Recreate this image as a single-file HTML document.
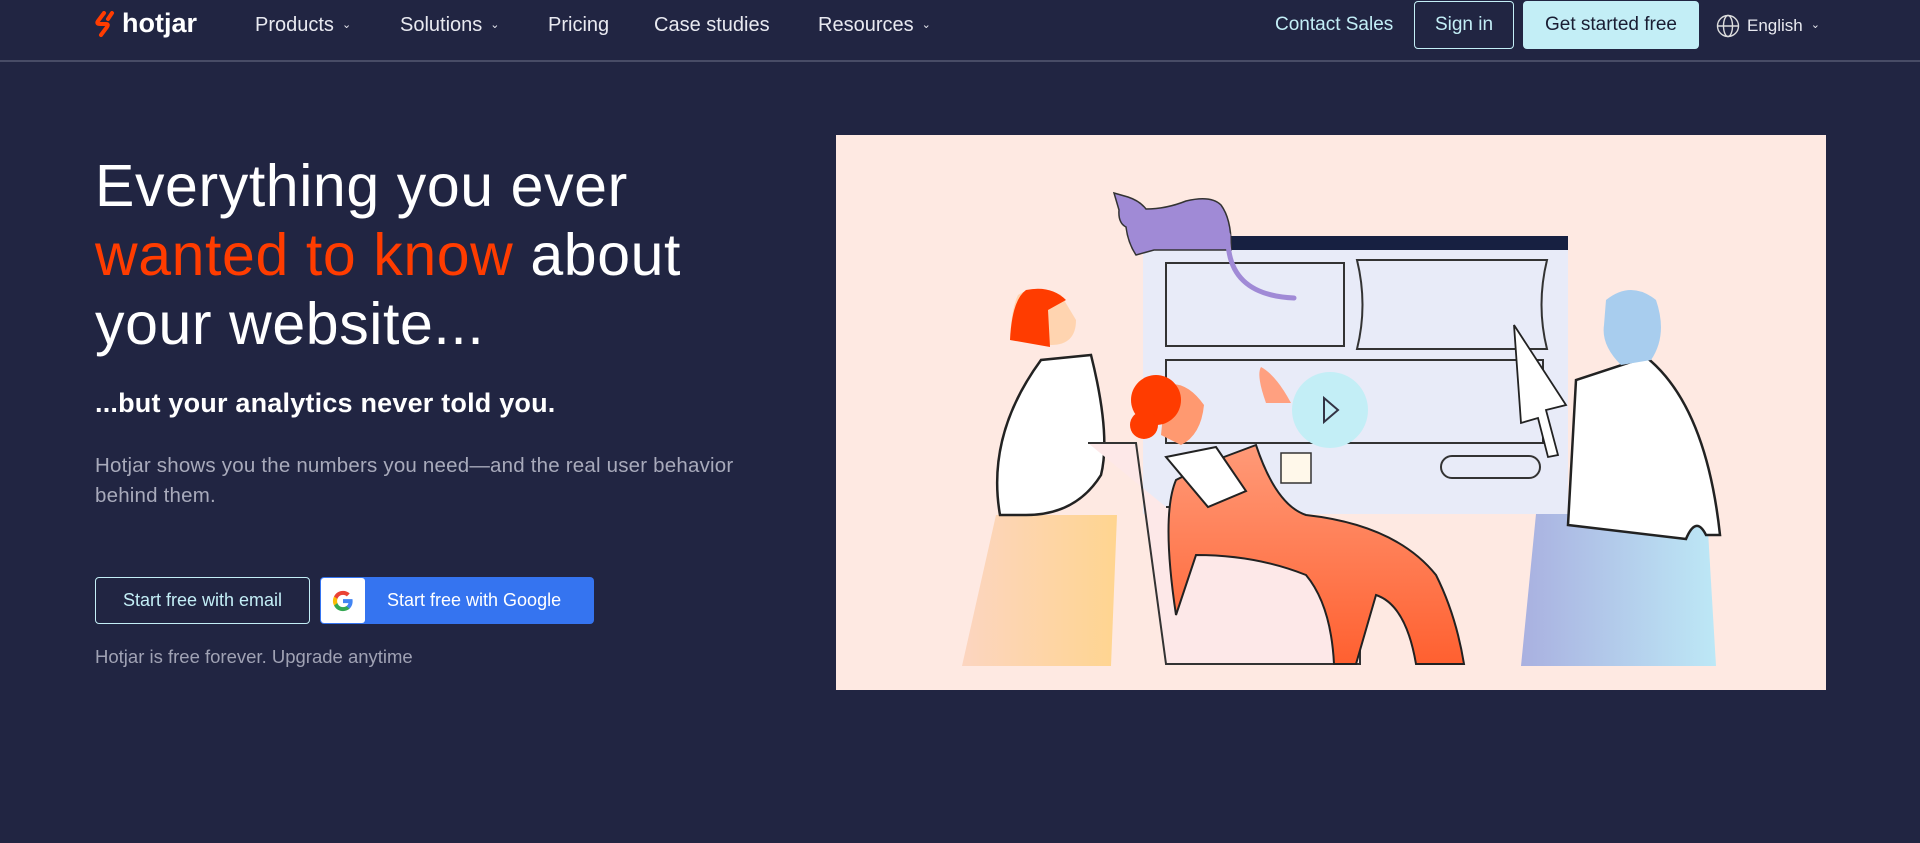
<!DOCTYPE html>
<html><head><meta charset="utf-8"><style>
*{margin:0;padding:0;box-sizing:border-box}
body{width:1920px;height:843px;background:#212542;font-family:"Liberation Sans",sans-serif;overflow:hidden;position:relative;color:#fff}
.nav{position:absolute;left:0;top:0;width:1920px;height:62px;border-bottom:2px solid #484c66}
.a{position:absolute;top:14px;font-size:20px;color:#e8e9f0}
.car{font-size:11px;margin-left:8px;vertical-align:3px}
.btn{position:absolute;border-radius:4px;font-size:19px;display:flex;align-items:center;justify-content:center}
h1{position:absolute;left:95px;top:152px;font-size:59px;font-weight:400;line-height:69px;letter-spacing:0.6px}
h1 span{color:#ff3c00}
.sub{position:absolute;left:95px;top:388px;font-size:27px;font-weight:700;letter-spacing:0.2px}
.p{position:absolute;left:95px;top:451px;font-size:20.5px;line-height:30px;color:#a8aabb;width:760px;letter-spacing:0.2px}
.foot{position:absolute;left:95px;top:646px;font-size:18.5px;color:#a0a2b4}
</style></head><body>
<div class="nav">
 <svg style="position:absolute;left:95px;top:11px" width="22" height="26" viewBox="0 0 22 26"><path d="M9 2 L3 10 Q1 13 5 13 L11 13 Q14 13 12 16 L6 24" stroke="#ff3c00" stroke-width="4" fill="none" stroke-linecap="round"/><path d="M17 2 L13 8" stroke="#ff3c00" stroke-width="4" stroke-linecap="round"/></svg>
 <div class="a" style="left:122px;top:8px;font-size:27px;font-weight:700;color:#fff">hotjar</div>
 <div class="a" style="left:255px">Products<span class="car">⌄</span></div>
 <div class="a" style="left:400px">Solutions<span class="car">⌄</span></div>
 <div class="a" style="left:548px">Pricing</div>
 <div class="a" style="left:654px">Case studies</div>
 <div class="a" style="left:818px">Resources<span class="car">⌄</span></div>
 <div class="a" style="left:1275px;color:#c3eef6;font-size:19px">Contact Sales</div>
 <div class="btn" style="left:1414px;top:1px;width:100px;height:48px;border:1.5px solid #c3eef6;color:#c3eef6">Sign in</div>
 <div class="btn" style="left:1523px;top:1px;width:176px;height:48px;background:#c3eef6;color:#1a1d33">Get started free</div>
 <svg style="position:absolute;left:1716px;top:14px" width="24" height="24" viewBox="0 0 24 24" fill="none" stroke="#ddd" stroke-width="1.4"><circle cx="12" cy="12" r="10.5"/><ellipse cx="12" cy="12" rx="4.5" ry="10.5"/><path d="M1.5 12h21"/></svg>
 <div class="a" style="left:1747px;top:16px;font-size:17px">English<span class="car">⌄</span></div>
</div>
<h1>Everything you ever<br><span>wanted to know</span> about<br>your website...</h1>
<div class="sub">...but your analytics never told you.</div>
<div class="p">Hotjar shows you the numbers you need—and the real user behavior<br>behind them.</div>
<div class="btn" style="left:95px;top:577px;width:215px;height:47px;border:1.5px solid #c3eef6;color:#c3eef6;font-size:18px">Start free with email</div>
<div class="btn" style="left:320px;top:577px;width:274px;height:47px;background:#3574f0;color:#fff;font-size:18px;justify-content:flex-start">
 <div style="width:44px;height:45px;background:#fff;border-radius:3px;margin-left:1px;display:flex;align-items:center;justify-content:center">
 <svg width="22" height="22" viewBox="0 0 48 48"><path fill="#4285F4" d="M45 24.5c0-1.6-.1-3.1-.4-4.5H24v8.5h11.8c-.5 2.7-2.1 5-4.4 6.6v5.5h7.1C42.6 36.7 45 31.1 45 24.5z"/><path fill="#34A853" d="M24 46c5.9 0 10.9-2 14.5-5.3l-7.1-5.5c-2 1.3-4.5 2.1-7.4 2.1-5.7 0-10.5-3.8-12.2-9H4.5v5.7C8.1 41.2 15.5 46 24 46z"/><path fill="#FBBC05" d="M11.8 28.3c-.4-1.3-.7-2.8-.7-4.3s.3-3 .7-4.3V14H4.5C3 17 2 20.4 2 24s1 7 2.5 10z"/><path fill="#EA4335" d="M24 10.7c3.2 0 6.1 1.1 8.4 3.3l6.3-6.3C34.9 4.1 29.9 2 24 2 15.5 2 8.1 6.8 4.5 14l7.3 5.7c1.7-5.2 6.5-9 12.2-9z"/></svg></div>
 <span style="margin-left:22px">Start free with Google</span></div>
<div class="foot">Hotjar is free forever. Upgrade anytime</div>

<svg style="position:absolute;left:836px;top:135px" width="990" height="555" viewBox="0 0 990 555">
<defs>
<linearGradient id="gy" x1="0" x2="1"><stop offset="0" stop-color="#fcd5c0"/><stop offset="1" stop-color="#ffd590"/></linearGradient>
<linearGradient id="go" x1="0" y1="0" x2="0" y2="1"><stop offset="0" stop-color="#ff9a78"/><stop offset="1" stop-color="#ff6030"/></linearGradient>
<linearGradient id="gb" x1="0" x2="1"><stop offset="0" stop-color="#a9b0e0"/><stop offset="1" stop-color="#bde8f6"/></linearGradient>
</defs>
<rect width="990" height="555" fill="#fee9e2"/>
<rect x="307" y="101" width="425" height="278" fill="#e8ebf8"/>
<rect x="307" y="101" width="425" height="14" fill="#172041"/>
<g fill="none" stroke="#333" stroke-width="2">
<rect x="330" y="128" width="178" height="83"/>
<path d="M521 125 H711 Q700 170 711 214 H521 Q532 170 521 125Z"/>
<rect x="330" y="225" width="377" height="83"/>
<rect x="605" y="321" width="99" height="22" rx="11"/>
</g>
<circle cx="494" cy="275" r="38" fill="#c3eef6"/>
<path d="M488 263 L502 275 L488 287Z" fill="none" stroke="#334" stroke-width="2"/>
<!-- cat -->
<path d="M278 58 L292 62 Q304 66 310 74 Q330 74 350 66 Q375 60 385 70 Q396 85 395 115 L318 115 L300 120 Q292 108 290 92 Q282 88 283 75Z" fill="#a08ad6" stroke="#333" stroke-width="1.5"/>
<path d="M392 100 Q390 160 458 163" fill="none" stroke="#a08ad6" stroke-width="5" stroke-linecap="round"/>
<!-- woman -->
<path d="M126 531 L160 380 L281 380 L275 531Z" fill="url(#gy)"/>
<path d="M164 380 Q150 300 205 225 L255 220 Q275 300 265 340 Q240 380 190 380Z" fill="#fff" stroke="#222" stroke-width="2.5"/>
<path d="M182 160 Q200 148 225 160 L240 185 Q240 210 215 210 L174 205 Q175 175 182 160Z" fill="#ffd4b0"/>
<path d="M190 155 Q215 150 230 165 L212 175 L214 212 L174 205 Q176 165 190 155Z" fill="#ff3c00"/>
<!-- chair -->
<path d="M252 308 L300 308 L330 529 L524 529 L524 440 Q480 380 400 372 L330 372" fill="#fde8e8" stroke="#333" stroke-width="2"/>
<!-- seated man -->
<path d="M340 480 Q325 380 340 345 L380 325 L420 310 Q440 370 470 380 Q560 390 600 440 Q620 480 628 529 L580 529 Q570 470 540 460 L520 529 L498 529 Q495 470 470 440 Q420 420 360 420Z" fill="url(#go)" stroke="#222" stroke-width="2"/>
<path d="M330 322 L380 312 L410 356 L372 372Z" fill="#fff" stroke="#222" stroke-width="2"/>
<path d="M430 268 Q420 240 425 232 Q440 240 455 268Z" fill="#ffa080"/>
<path d="M330 250 Q350 245 368 270 Q365 300 345 310 L325 300Z" fill="#ff9970"/>
<circle cx="320" cy="265" r="25" fill="#ff3c00"/>
<circle cx="308" cy="290" r="14" fill="#ff3c00"/>
<rect x="445" y="318" width="30" height="30" fill="#fff8ea" stroke="#333" stroke-width="1.5"/>
<!-- right man -->
<path d="M685 531 L700 379 L871 379 L880 531Z" fill="url(#gb)"/>
<path d="M732 390 L740 245 L810 222 Q870 270 884 400 L870 400 Q860 380 850 404Z" fill="#fff" stroke="#222" stroke-width="2.5"/>
<path d="M770 165 Q795 145 820 165 Q832 200 815 225 L785 230 Q765 210 768 190Z" fill="#a8cdee"/>
<path d="M678 190 L730 270 L710 275 L722 320 L712 322 L702 283 L685 288Z" fill="#fff" stroke="#222" stroke-width="1.8"/>
</svg>
</body></html>
